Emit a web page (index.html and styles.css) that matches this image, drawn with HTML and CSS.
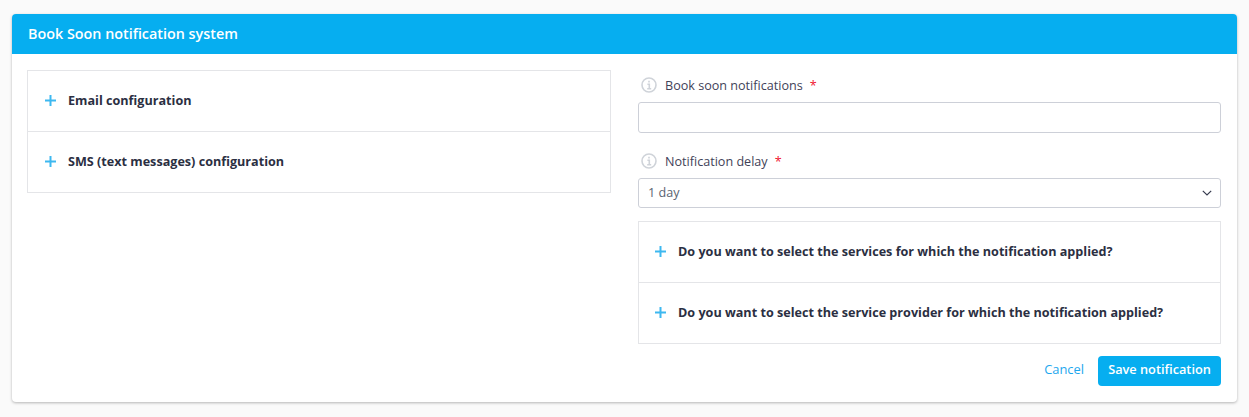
FILE: index.html
```html
<!DOCTYPE html>
<html lang="en">
<head>
<meta charset="utf-8">
<title>Book Soon notification system</title>
<link rel="stylesheet" href="styles.css">
</head>
<body>
<section class="card">
  <header class="card-header">Book Soon notification system</header>
  <div class="card-body">
    <div class="accordion">
      <div class="acc-row">
        <svg class="plus" viewBox="0 0 11 11"><path d="M5.5 0v11M0 5.5h11"/></svg>
        <span>Email configuration</span>
      </div>
      <div class="acc-row">
        <svg class="plus" viewBox="0 0 11 11"><path d="M5.5 0v11M0 5.5h11"/></svg>
        <span>SMS (text messages) configuration</span>
      </div>
    </div>
    <div class="right">
      <div class="field">
        <div class="label">
          <svg class="info" viewBox="0 0 16 16"><circle cx="8" cy="8" r="7"/><path d="M8 3.8v1.6M6.4 7.2H8.3v4.6M6.2 11.8h4"/></svg>
          <span>Book soon notifications</span><span class="req req-wide">*</span>
        </div>
        <div class="input"></div>
      </div>
      <div class="field">
        <div class="label">
          <svg class="info" viewBox="0 0 16 16"><circle cx="8" cy="8" r="7"/><path d="M8 3.8v1.6M6.4 7.2H8.3v4.6M6.2 11.8h4"/></svg>
          <span>Notification delay</span><span class="req">*</span>
        </div>
        <div class="select">
          <span>1 day</span>
          <svg class="chev" viewBox="0 0 10 6"><path d="M.8.8 5 5 9.2.8"/></svg>
        </div>
      </div>
      <div class="accordion acc-right">
        <div class="acc-row">
          <svg class="plus" viewBox="0 0 11 11"><path d="M5.5 0v11M0 5.5h11"/></svg>
          <span>Do you want to select the services for which the notification applied?</span>
        </div>
        <div class="acc-row">
          <svg class="plus" viewBox="0 0 11 11"><path d="M5.5 0v11M0 5.5h11"/></svg>
          <span>Do you want to select the service provider for which the notification applied?</span>
        </div>
      </div>
      <div class="actions">
        <a class="cancel">Cancel</a>
        <button class="save">Save notification</button>
      </div>
    </div>
  </div>
</section>
</body>
</html>
```
FILE: styles.css
```css
* { box-sizing: border-box; }
html, body { height: 100%; }
body {
  margin: 0;
  padding: 14px 12px 0;
  background: #fafafa;
  font-family: "Open Sans", sans-serif;
  font-size: 13px;
  color: #2b2f42;
}
.card {
  height: 388px;
  background: #fff;
  border-radius: 4px;
  box-shadow: 0 1px 3px rgba(0, 0, 0, .28);
  overflow: hidden;
}
.card-header {
  height: 40px;
  padding: 0 16px 1px;
  display: flex;
  align-items: center;
  background: #06aef0;
  color: #fff;
  font-size: 14.35px;
  font-weight: 600;
}
.card-body {
  display: grid;
  grid-template-columns: 584px 583px;
  column-gap: 27px;
  align-items: start;
  padding: 16px 16px 0 15px;
}
.accordion { border: 1px solid #e4e5e8; }
.acc-row {
  height: 60px;
  display: flex;
  align-items: center;
  gap: 12px;
  padding: 0 0 1px 17px;
  font-size: 12.62px;
  font-weight: 700;
  color: #2b2f42;
}
.acc-row + .acc-row { height: 61px; border-top: 1px solid #e4e5e8; }
.acc-right .acc-row { gap: 12px; padding-left: 16px; }
.plus { width: 11px; height: 11px; flex: none; }
.plus path { fill: none; stroke: #3db8f0; stroke-width: 2; }
.field { display: flex; flex-direction: column; }
.label {
  height: 32px;
  display: flex;
  align-items: center;
  padding-left: 3px;
  padding-bottom: 2px;
  font-size: 12.6px;
  color: #3f4258;
}
.info { width: 16px; height: 16px; margin-right: 8px; flex: none; }
.info circle, .info path { fill: none; stroke: #cfd3d9; stroke-width: 1.6; }
.req { margin-left: 7px; color: #f0142f; }
.req-wide { margin-left: 7px; }
.input {
  height: 31px;
  margin-bottom: 13px;
  border: 1px solid #cdd0d8;
  border-radius: 3px;
}
.select {
  height: 30px;
  display: flex;
  align-items: center;
  justify-content: space-between;
  padding: 0 8px 2px 9px;
  border: 1px solid #cdd0d8;
  border-radius: 3px;
  font-size: 12.6px;
  color: #5a6472;
}
.chev { width: 10px; height: 6px; margin-top: 2px; }
.chev path { fill: none; stroke: #3a3f52; stroke-width: 1.2; }
.acc-right { margin-top: 13px; }
.actions {
  display: flex;
  justify-content: flex-end;
  align-items: center;
  gap: 14px;
  margin-top: 12px;
}
.cancel { font-size: 12.9px; color: #1ea7ee; padding-bottom: 4px; }
.save {
  width: 123px;
  height: 30px;
  padding: 0 0 5px;
  border: 0;
  border-radius: 4px;
  background: #06aef0;
  color: #fff;
  font: 600 12.75px "Open Sans", sans-serif;
}
```
